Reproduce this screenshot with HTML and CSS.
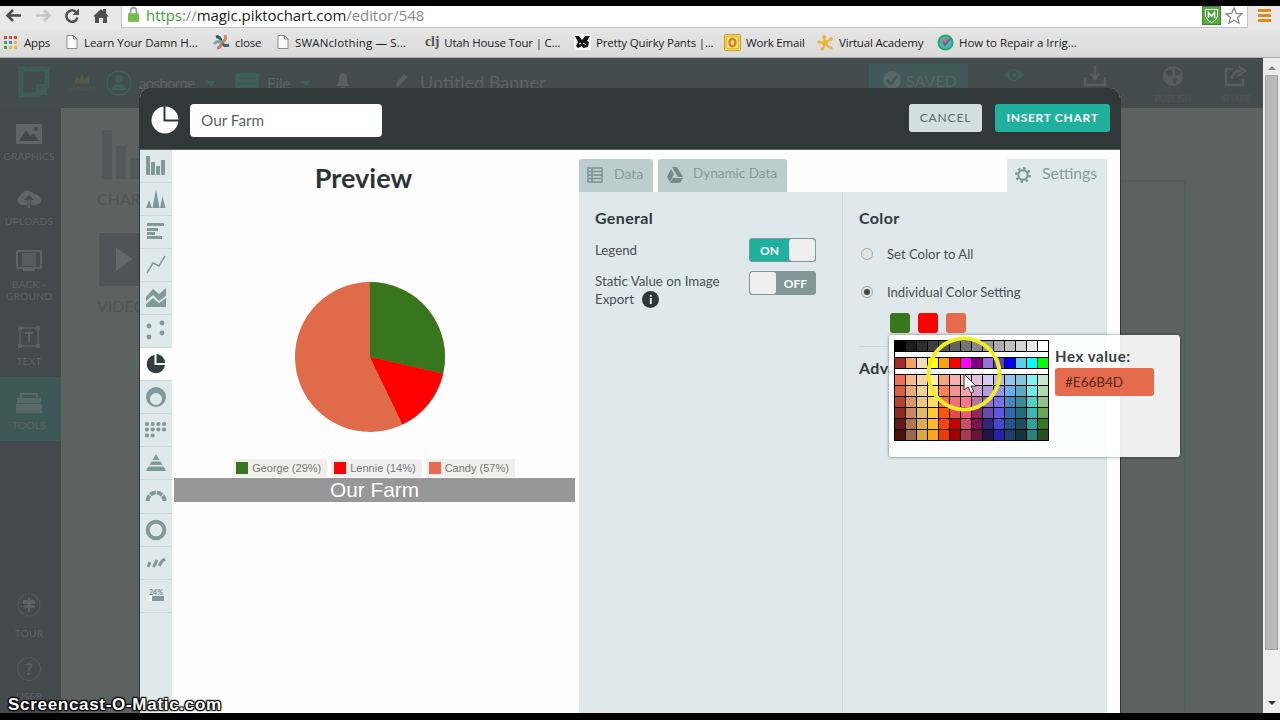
FILE: index.html
```html
<!DOCTYPE html>
<html lang="en">
<head>
    <meta charset="UTF-8">
    <title>Untitled Banner - Piktochart Editor</title>
    <link rel="stylesheet" href="styles.css">
</head>
<body>
    <div class="toolbar">
        <svg class="nav-icons" width="121" height="23" viewBox="0 0 121 23">
            <g fill="none" stroke-width="2.6">
                <path d="M21 9.500H8M13 4L7.500 9.500L13 15" stroke="#4c4c4c"/>
                <path d="M36 9.500H49M44 4L49.500 9.500L44 15" stroke="#c4c4c4"/>
                <path d="M76.500 6.500A5.700 5.700 0 1 0 77.500 11.500" stroke="#505050"/>
            </g>
            <path d="M79 2.500V9H72.500Z" fill="#505050"/>
            <path d="M93 10.500L101 3L103 5V3H106V7.500L109 10.500H107V17H103V12H99V17H95V10.500Z" fill="#505050"/>
        </svg>
        <div class="omnibox">
            <svg width="13" height="17" viewBox="0 0 13 17">
                <path d="M3.500 8V5A3 3.500 0 0 1 9.500 5V8" fill="none" stroke="#9a9a9a" stroke-width="1.800"/>
                <rect x="1" y="7" width="11" height="9" rx="1" fill="#7bc653"/>
                <path d="M1 10H12M1 13H12" stroke="#62ad3c"/>
            </svg>
            <span class="url"><span class="secure">https</span><span class="dim">://</span>magic.piktochart.com<span class="dim">/editor/548</span></span>
            <svg class="box-icons" width="42" height="20" viewBox="0 0 42 20">
                <rect x=".5" y=".5" width="18" height="18" fill="#57ab41" stroke="#378a2c"/>
                <path d="M3.500 3.500H15.500V10Q14 15 9.500 16.500Q5 15 3.500 10Z" fill="#4ca238" stroke="#fff"/>
                <path d="M6.500 12V6.500L9.500 10L12.500 6.500V12" fill="none" stroke="#fff" stroke-width="1.500"/>
                <path d="M32 2L34.300 7.300L40 7.800L35.600 11.600L37 17.200L32 14.200L27 17.200L28.400 11.600L24 7.800L29.700 7.300Z" fill="#fff" stroke="#888" stroke-width="1.300"/>
            </svg>
        </div>
        <div class="menu"><i></i><i></i><i></i></div>
    </div>

    <div class="bookmarks">
        <div class="bookmark">
            <svg width="16" height="16" viewBox="0 0 16 16">
                <g fill="#e0443a"><rect x="1" y="2" width="3" height="3"/><rect x="6" y="2" width="3" height="3"/><rect x="11" y="2" width="3" height="3"/></g>
                <g><rect x="1" y="7" width="3" height="3" fill="#3aa655"/><rect x="6" y="7" width="3" height="3" fill="#3f7ee8"/><rect x="11" y="7" width="3" height="3" fill="#edb62f"/></g>
                <g><rect x="1" y="12" width="3" height="3" fill="#3aa655"/><rect x="6" y="12" width="3" height="3" fill="#edb62f"/><rect x="11" y="12" width="3" height="3" fill="#edb62f"/></g>
            </svg>
            <span>Apps</span>
        </div>
        <div class="bookmark">
            <svg width="14" height="16" viewBox="0 0 14 16"><path d="M2 1.500H8.500L12 5V14.500H2ZM8.500 1.500V5H12" fill="#fafafa" stroke="#8d8d8d"/></svg>
            <span>Learn Your Damn H...</span>
        </div>
        <div class="bookmark">
            <svg width="17" height="16" viewBox="0 0 17 16">
                <g fill="none" stroke-width="3">
                    <path d="M8.500 8Q7 2 3 3" stroke="#33566a"/><path d="M8.500 8Q14 7 12 1" stroke="#d6866b"/>
                    <path d="M8.500 8Q10 13 16 11" stroke="#35677e"/><path d="M8.500 8Q8 14 4 14" stroke="#d1775e"/><path d="M8.500 8Q5 6 1 10" stroke="#78a6a5"/>
                </g>
            </svg>
            <span>close</span>
        </div>
        <div class="bookmark">
            <svg width="14" height="16" viewBox="0 0 14 16"><path d="M2 1.500H8.500L12 5V14.500H2ZM8.500 1.500V5H12" fill="#fafafa" stroke="#8d8d8d"/></svg>
            <span class="wide">SWANclothing — S...</span>
        </div>
        <div class="bookmark"><b class="clj">clj</b><span>Utah House Tour | C...</span></div>
        <div class="bookmark">
            <svg width="17" height="16" viewBox="0 0 17 16">
                <rect width="17" height="16" fill="#f7f7f7"/>
                <path d="M1 2H5L8 6L11 2H16L13 7L15 8L14 13L9 14L8 12L4 14L2 12L4 8Z" fill="#151515"/>
                <path d="M9 9L12 11M5 10L7 9" fill="none" stroke="#eee"/>
            </svg>
            <span>Pretty Quirky Pants |...</span>
        </div>
        <div class="bookmark">
            <svg width="17" height="17" viewBox="0 0 17 17"><rect x=".5" y=".5" width="16" height="16" rx="1" fill="#f8d65a" stroke="#d59c1c"/><rect x="2.500" y="2.500" width="12" height="12" fill="#fbe48b" stroke="#e5b53a"/><ellipse cx="8.500" cy="8.500" rx="3" ry="3.800" fill="none" stroke="#d18618" stroke-width="2.400"/></svg>
            <span>Work Email</span>
        </div>
        <div class="bookmark">
            <svg width="17" height="17" viewBox="0 0 17 17">
                <g stroke="#e9ae2d" stroke-width="2"><path d="M8 9L7 3M8 9L14 5M8 9L13 14M8 9L6 15M8 9L2 8"/></g>
                <g fill="#edb538"><circle cx="8" cy="9" r="3"/><circle cx="7" cy="3" r="2"/><circle cx="14" cy="5" r="2"/><circle cx="14" cy="14" r="1.800"/><circle cx="5" cy="15" r="1.800"/><circle cx="2" cy="8" r="1.800"/></g>
            </svg>
            <span>Virtual Academy</span>
        </div>
        <div class="bookmark">
            <svg width="17" height="17" viewBox="0 0 17 17"><circle cx="8.500" cy="8.500" r="7" fill="#56b4c2" stroke="#28a866" stroke-width="2"/><path d="M4 7L8 4L12 6L10 11Z" fill="#d4745c"/><path d="M6 8L8 11L13 5" fill="none" stroke="#3a77a8" stroke-width="2"/></svg>
            <span class="wide">How to Repair a Irrig...</span>
        </div>
    </div>

    <div class="viewport">
        <div class="app">
            <div class="app-bar">
                <svg class="logo" width="36" height="36" viewBox="0 0 36 36"><path d="M5 5H31V22L22 31H5Z" fill="none" stroke="#405d59" stroke-width="5"/><path d="M20 20H31V31H20Z" fill="#405d59"/><path d="M5 5H31V31H5Z" fill="none" stroke="#46504f" stroke-dasharray="2 4"/></svg>
                <div class="pro">
                    <svg width="18" height="13" viewBox="0 0 22 14"><path d="M2 13L3 4L8 8L11 1L14 8L19 4L20 13Z" fill="#555849"/></svg>
                    <span>UPGRADE</span>
                </div>
                <svg class="avatar" width="26" height="26" viewBox="0 0 26 26"><circle cx="13" cy="13" r="12" fill="none" stroke="#3c605d" stroke-width="1.500"/><circle cx="13" cy="9" r="4" fill="#3c605d"/><path d="M5 20Q6 14 13 14Q20 14 21 20Z" fill="#3c605d"/></svg>
                <span class="user">aosborne</span>
                <i class="caret"></i>
                <svg class="file-icon" width="26" height="19" viewBox="0 0 24 18"><rect x="1" y="1" width="22" height="16" rx="2" fill="#3c605d"/><path d="M4 6H20M4 11H20" stroke="#45504f" stroke-width="1.500"/></svg>
                <span class="file">File</span>
                <i class="caret"></i>
                <svg class="bell" width="16" height="18" viewBox="0 0 16 18"><path d="M1 14Q4 12 4 6Q4 2 8 1Q12 2 12 6Q12 12 15 14ZM6 15H10L8 17Z" fill="#596160"/></svg>
                <svg class="pencil" width="14" height="16" viewBox="0 0 14 16"><path d="M1 15L2 10L9 2L12 5L5 13Z" fill="#566060"/></svg>
                <span class="title">Untitled Banner</span>
                <div class="saved">
                    <svg width="20" height="20" viewBox="0 0 20 20"><circle cx="10" cy="10" r="9" fill="#5b6666"/><path d="M5 10L9 14L15 6" fill="none" stroke="#3f5754" stroke-width="2.500"/></svg>
                    SAVED
                </div>
                <svg class="eye" width="22" height="16" viewBox="0 0 22 16"><path d="M1 8Q11 -4 21 8Q11 20 1 8Z" fill="#3b5f5b"/><circle cx="11" cy="8" r="4.500" fill="#434d4e"/><circle cx="11" cy="8" r="2.200" fill="#3b5f5b"/></svg>
                <div class="action download"><svg width="24" height="24" viewBox="0 0 24 24"><path d="M2 13V21H22V13M12 2V14M8 10L12 15L16 10" fill="none" stroke="#565e5d" stroke-width="2.500"/></svg><span>DOWNLOADS</span></div>
                <div class="action"><svg width="24" height="24" viewBox="0 0 24 24"><circle cx="12" cy="12" r="10" fill="#565e5d"/><path d="M4 8L10 5L12 10L8 13ZM14 4L20 8L17 12L14 10ZM11 15L16 14L14 21" fill="#434b4c"/></svg><span>PUBLISH</span></div>
                <div class="action share"><svg width="24" height="24" viewBox="0 0 24 24"><path d="M9 5H2V21H19V15M8 15Q8 7 17 7M14 2L21 7L14 12" fill="none" stroke="#565e5d" stroke-width="2.500"/></svg><span>SHARE</span></div>
            </div>
            <div class="app-body">
                <div class="sidebar">
                    <div class="side-item">
                        <svg width="26" height="20" viewBox="0 0 26 20"><rect width="26" height="20" rx="1" fill="#5d6566"/><path d="M3 17L10 6L14 12L17 9L23 17Z" fill="#42494a"/><circle cx="20" cy="5" r="2" fill="#42494a"/></svg>
                        <span>GRAPHICS</span>
                    </div>
                    <div class="side-item">
                        <svg width="26" height="20" viewBox="0 0 26 20"><path d="M5 16A5 5 0 0 1 4 7A8 8 0 0 1 18 5Q25 6 25 12Q24 16 20 16H15V11H18L13 6L8 11H11V16ZM12 11H14V19H12Z" fill="#5d6566"/></svg>
                        <span>UPLOADS</span>
                    </div>
                    <div class="side-item tall">
                        <svg width="26" height="22" viewBox="0 0 26 22"><rect x="1" y="1" width="24" height="17" rx="1" fill="none" stroke="#5b6364" stroke-width="2"/><rect x="6" y="3" width="14" height="13" fill="#545c5d"/><path d="M7 19H19V21H7Z" fill="#5b6364"/></svg>
                        <span>BACK -<br>GROUND</span>
                    </div>
                    <div class="side-item">
                        <svg width="24" height="24" viewBox="0 0 24 24"><rect x="3" y="3" width="18" height="18" fill="none" stroke="#596162" stroke-width="1.500"/><path d="M1 1H5V5H1ZM19 1H23V5H19ZM1 19H5V23H1ZM19 19H23V23H19Z" fill="#596162"/><path d="M8 8H16M12 8V17" stroke="#596162" stroke-width="2"/></svg>
                        <span>TEXT</span>
                    </div>
                    <div class="side-item active">
                        <svg width="26" height="21" viewBox="0 0 26 21"><path d="M5 6V2H21V6" fill="none" stroke="#5a6867" stroke-width="2"/><path d="M1 6H25V11H1ZM0 12H26V21H0Z" fill="#5a6867"/></svg>
                        <span>TOOLS</span>
                    </div>
                    <div class="side-item tour">
                        <svg width="24" height="24" viewBox="0 0 24 24"><circle cx="12" cy="12" r="11" fill="none" stroke="#545c5e"/><path d="M6 7H17L19 9L17 11H6ZM8 12H18V15H8L5 13.500ZM11 5H13V19H11Z" fill="#5b6364"/></svg>
                        <span>TOUR</span>
                    </div>
                    <div class="side-item help">
                        <b>?</b>
                        <span>USER</span>
                    </div>
                </div>
                <div class="tool-list">
                    <svg width="48" height="49" viewBox="0 0 48 49"><path d="M0 0H10V49H0ZM14 16H24V49H14ZM28 28H38V49H28Z" fill="#515958"/></svg>
                    <span>CHARTS</span>
                    <svg class="video" width="50" height="53" viewBox="0 0 50 53"><rect width="50" height="53" fill="#4d5556"/><path d="M17 15L34 26L17 38Z" fill="#616867"/></svg>
                    <span>VIDEOS</span>
                </div>
                <div class="canvas"></div>
            </div>
        </div>
        <div class="scrollbar"><i class="up"></i><div class="thumb"></div><i class="down"></i></div>

        <div class="modal">
            <div class="modal-header">
                <svg width="28" height="28" viewBox="0 0 28 28"><circle cx="14" cy="14" r="13.500" fill="#fff"/><path d="M13.500 0V14.500H28" fill="none" stroke="#303838" stroke-width="2"/></svg>
                <div class="name-input">Our Farm</div>
                <div class="btn cancel">CANCEL</div>
                <div class="btn insert">INSERT CHART</div>
            </div>
            <div class="modal-body">
                <div class="chart-types">
                    <div class="type"><svg width="22" height="22" viewBox="0 0 22 22"><path d="M1 1H5V20H1ZM6 7H10V20H6ZM11 11H15V20H11ZM16 5H20V20H16Z"/></svg></div>
                    <div class="type"><svg width="22" height="22" viewBox="0 0 22 22"><path d="M1 20L4 12L7 20ZM7.500 20L11 1L14.500 20ZM15 20L17.500 8L20.500 20Z"/></svg></div>
                    <div class="type"><svg width="22" height="22" viewBox="0 0 22 22"><path d="M2 2H19V5H2ZM2 7H13V10H2ZM2 11H10V14H2ZM2 15H17V18H2Z"/></svg></div>
                    <div class="type"><svg width="22" height="22" viewBox="0 0 22 22"><path class="line" d="M2 19L8 9L14 12L20 2"/></svg></div>
                    <div class="type"><svg width="22" height="22" viewBox="0 0 22 22"><path d="M1 10L8 2L14 7L21 1V9L14 14L8 8L1 14ZM1 17L8 11L14 16L21 11V20H1Z"/></svg></div>
                    <div class="type"><svg width="22" height="22" viewBox="0 0 22 22"><circle cx="4" cy="6" r="2.400"/><circle cx="17" cy="3" r="2.400"/><circle cx="4" cy="17" r="2.400"/><circle cx="17" cy="13" r="2.400"/></svg></div>
                    <div class="type selected"><svg width="22" height="22" viewBox="0 0 22 22"><path d="M9.500 2A9.200 9.200 0 1 0 20 12H9.500ZM11.500 1A9 9 0 0 1 20 10H11.500Z"/></svg></div>
                    <div class="type"><svg width="22" height="22" viewBox="0 0 22 22"><path fill-rule="evenodd" d="M11 1A10 10 0 1 0 11 21A10 10 0 1 0 11 1ZM11 7A6 6 0 1 1 11 19A6 6 0 1 1 11 7Z"/></svg></div>
                    <div class="type"><svg width="22" height="22" viewBox="0 0 22 22"><g><circle cx="2" cy="5" r="2.100"/><circle cx="7.700" cy="5" r="2.100"/><circle cx="13.400" cy="5" r="2.100"/><circle cx="19" cy="5" r="2.100"/><circle cx="2" cy="10.500" r="2.100"/><circle cx="7.700" cy="10.500" r="2.100"/><circle cx="13.400" cy="10.500" r="2.100"/><circle cx="19" cy="10.500" r="2.100"/><circle cx="2" cy="16.500" r="2.100"/><circle cx="7.700" cy="16.500" r="2.100"/></g></svg></div>
                    <div class="type"><svg width="22" height="22" viewBox="0 0 22 22"><path d="M11 2L14.500 8H7.500ZM6.500 9.500H15.500L17.500 13H4.500ZM3.500 14.500H18.500L21 19H1Z"/></svg></div>
                    <div class="type"><svg width="22" height="22" viewBox="0 0 22 22"><path class="gauge" d="M2.500 16A8.500 8.500 0 0 1 19.500 16"/></svg></div>
                    <div class="type"><svg width="22" height="22" viewBox="0 0 22 22"><circle class="ring" cx="11" cy="11" r="8.300"/></svg></div>
                    <div class="type"><svg width="22" height="22" viewBox="0 0 22 22"><path class="slash" d="M3 15L5 10M8.500 15L12 8M14 14L17 9L20 7"/></svg></div>
                    <div class="type percent"><span>24%</span><i></i></div>
                </div>
                <div class="preview">
                    <h2>Preview</h2>
                    <svg class="pie" width="150" height="150" viewBox="0 0 150 150">
                        <circle cx="75" cy="75" r="75" fill="#e06b4b"/>
                        <path d="M75 75V0A75 75 0 0 1 148.100 91.700Z" fill="#38761d"/>
                        <path d="M75 75L148.100 91.700A75 75 0 0 1 107.500 142.600Z" fill="#ff0000"/>
                    </svg>
                    <div class="legend">
                        <span><i class="green"></i>George (29%)</span>
                        <span><i class="red"></i>Lennie (14%)</span>
                        <span><i class="orange"></i>Candy (57%)</span>
                    </div>
                    <div class="caption">Our Farm</div>
                </div>
                <div class="options">
                    <div class="tabs">
                        <div class="tab data">
                            <svg width="16" height="16" viewBox="0 0 16 16"><path d="M1 1H15V15H1ZM1 4.500H15M1 8H15M1 11.500H15M5 1V15" fill="none" stroke="#7a9394" stroke-width="1.500"/></svg>
                            Data
                        </div>
                        <div class="tab dynamic">
                            <svg width="18" height="16" viewBox="0 0 18 16"><path d="M6 0H11L17 10H12ZM5 2L8 7L4 15L1 10ZM7 11H17L14 16H4Z" fill="#728a8b"/></svg>
                            Dynamic Data
                        </div>
                        <div class="tab settings">
                            <svg width="16" height="16" viewBox="0 0 16 16"><circle cx="8" cy="8" r="4.700" fill="none" stroke="#7a9394" stroke-width="2"/><circle cx="8" cy="8" r="6.700" fill="none" stroke="#7a9394" stroke-width="2.400" stroke-dasharray="2.400 2.860"/></svg>
                            Settings
                        </div>
                    </div>
                    <div class="panels">
                        <div class="general">
                            <h3>General</h3>
                            <div class="option">
                                <span>Legend</span>
                                <div class="switch on"><b>ON</b><i></i></div>
                            </div>
                            <div class="option export">
                                <span>Static Value on Image<br>Export <em>i</em></span>
                                <div class="switch off"><i></i><b>OFF</b></div>
                            </div>
                        </div>
                        <div class="color">
                            <h3>Color</h3>
                            <div class="choice"><i></i>Set Color to All</div>
                            <div class="choice checked"><i></i>Individual Color Setting</div>
                            <div class="swatches"><i class="green"></i><i class="red"></i><i class="orange"></i></div>
                            <h3 class="advanced">Advanced</h3>
                        </div>
                    </div>
                </div>
            </div>
        </div>

        <div class="picker">
            <div class="palette" id="palette"></div>
            <div class="hex">
                <label>Hex value:</label>
                <div class="hex-input">#E66B4D</div>
            </div>
        </div>
        <svg class="pointer" width="76" height="76" viewBox="0 0 76 76">
            <circle cx="38" cy="38" r="35.500" fill="none" stroke="#f0f01e" stroke-width="4"/>
            <path d="M38 38V54L42 51L45 57L48 55.500L45 50H50Z" fill="#fff" stroke="#333" stroke-width="1"/>
        </svg>
    </div>
    <div class="watermark">Screencast-O-Matic.com</div>

    <script>
        const groups = [
            ['000 1c1c1c 2d2d2d 3e3e3e 505050 626262 747474 878787 9a9a9a adadad c0c0c0 d3d3d3 e9e9e9 fff'],
            ['a52a2a f4a460 f5deb3 ff0 ffa500 f00 f0f 800080 9370db 5b48b8 00f 56cfea 0ff 0f0'],
            [
                'ee7350 f3bc85 f7d6a6 fff0a0 f6a27a f7b1b1 ffc5d0 dfc4dc d9c9f0 b6bcf0 92c4ee 83c5d9 7bf5ed c8e8ce',
                'd9603f e8ae78 f5d391 ffe878 fb8352 f39494 ff9fae cfa0cb b79be5 9496ee 68aee8 5babbb 6dedeb aedbab',
                'b3442b d79968 efc77c ffdc5b ff7330 ec7177 ff728c b2739e 936fd5 7771e8 448ac2 388c98 4fd1ce 8fc383',
                '8b2a20 c58a5b e5b95e ffcb31 ff5700 df4c50 ee5570 912560 694bac 5959df 286dad 236d79 37b9b5 67a653',
                '641818 ad7951 dfad4e ffbd22 ff4300 c70000 d04862 7c124e 34237d 4646ce 21558c 1a505c 2ba39d 37751e',
                '4b100c 99694a dca63e ffa51b f43a00 a20000 ae364e 69133f 211448 2222ad 1a436f 12363b 23857f 28501a'
            ]
        ];
        const palette = document.getElementById('palette');
        groups.forEach(rows => {
            const group = document.createElement('div');
            group.className = 'palette-group';
            rows.join(' ').split(' ').forEach(hex => {
                const cell = document.createElement('i');
                cell.style.background = '#' + hex;
                group.appendChild(cell);
            });
            palette.appendChild(group);
        });
    </script>
</body>
</html>
```

FILE: styles.css
```css
* {
    box-sizing: border-box;
}
body {
    margin: 0;
    width: 1280px;
    height: 720px;
    overflow: hidden;
    background: #000;
    border-top: 6px solid #000;
    border-bottom: 7px solid #000;
    display: flex;
    flex-direction: column;
    position: relative;
    font-family: Lato, sans-serif;
}
svg {
    display: block;
    flex: none;
}
h2, h3 {
    margin: 0;
}

/* browser */
.toolbar {
    height: 23px;
    flex: none;
    display: flex;
    background: #e9e9e9;
}
.omnibox {
    width: 1127px;
    height: 22px;
    background: #fff;
    border-left: 1px solid #c5c5c5;
    border-right: 1px solid #c5c5c5;
    display: flex;
    align-items: flex-start;
    padding-left: 5px;
    border-bottom: 1px solid #c2c2c2;
}
.url {
    flex: 1;
    margin-left: 6px;
    font: 15px/19px "Open Sans", sans-serif;
    letter-spacing: -.06px;
    color: #222;
}
.url .secure {
    color: #43a035;
}
.url .dim {
    color: #8a8a8a;
}
.box-icons {
    margin-right: 3px;
}
.menu {
    margin: 3px 0 0 10px;
    width: 13px;
}
.menu i {
    display: block;
    height: 3px;
    margin-bottom: 2px;
    background: #df8a1b;
}
.bookmarks {
    height: 29px;
    flex: none;
    padding: 0 0 2px 3px;
    background: linear-gradient(#e5e5e5, #dadada);
    border-bottom: 1px solid #aaa;
    display: grid;
    grid-template-columns: 62px 148px 63px 149px 149px 150px 93px 120px 200px;
}
.bookmark {
    display: flex;
    align-items: center;
    gap: 5px;
    font: 11.500px "Open Sans", sans-serif;
    letter-spacing: -.18px;
    color: #222;
    white-space: nowrap;
}
.bookmark:nth-child(2) span {
    letter-spacing: -.05px;
}
.bookmark .wide {
    letter-spacing: -.06px;
}
.bookmark:nth-child(4) .wide {
    letter-spacing: .15px;
}
.clj {
    font: bold 14px "Liberation Serif", serif;
    color: #555;
}

/* dimmed editor behind the dialog */
.viewport {
    height: 655px;
    flex: none;
    display: flex;
    position: relative;
    overflow: hidden;
}
.app {
    width: 1263px;
    height: 655px;
    display: flex;
    flex-direction: column;
    background: #5b6260;
}
.app-bar {
    height: 50px;
    flex: none;
    display: flex;
    background: #434c4d;
    padding-left: 16px;
    overflow: hidden;
    color: #5a6362;
}
.app-bar > * {
    flex: none;
}
.logo {
    margin-top: 6px;
}
.pro {
    width: 30px;
    margin: 14px 0 0 15px;
    display: flex;
    flex-direction: column;
    align-items: center;
    font-size: 6px;
    color: #56533f;
}
.avatar {
    margin: 12px 0 0 9px;
}
.user, .file {
    margin: 15px 0 0 7px;
    font-size: 15px;
    line-height: 20px;
}
.user {
    width: 57px;
    letter-spacing: -.7px;
}
.user, .file, .title {
    white-space: nowrap;
}
.caret {
    margin: 23px 0 0 10px;
    width: 10px;
    height: 5px;
    border: 5px solid transparent;
    border-top-color: #3c605d;
}
.file-icon {
    margin: 14px 0 0 18px;
}
.file {
    width: 22px;
}
.file + .caret {
    margin-left: 12px;
}
.bell {
    margin: 14px 0 0 24px;
}
.pencil {
    margin: 14px 0 0 44px;
}
.title {
    width: 449px;
    margin: 12px 0 0 11px;
    font-size: 18px;
    line-height: 24px;
}
.saved {
    width: 99px;
    height: 32px;
    margin-top: 6px;
    background: #40585a;
    display: flex;
    align-items: center;
    gap: 4px;
    padding-left: 13px;
    font-size: 16px;
}
.eye {
    margin: 9px 59px 0 35px;
}
.action {
    width: 80px;
    padding-top: 6px;
    display: flex;
    flex-direction: column;
    align-items: center;
    gap: 6px;
    font-size: 9px;
    line-height: 10px;
    color: #4e5655;
    margin-left: -18px;
}
.action.download {
    margin: 0 16px 0 -29px;
}
.action.share {
    margin-left: -17px;
}
.app-body {
    flex: 1;
    min-height: 0;
    display: flex;
}
.sidebar {
    width: 61px;
    background: #424a4b;
}
.side-item {
    height: 65px;
    width: 58px;
    padding-top: 16px;
    display: flex;
    flex-direction: column;
    align-items: center;
    gap: 6px;
    font-size: 10.400px;
    line-height: 12px;
    letter-spacing: .1px;
    text-align: center;
    color: #5b6363;
}
.side-item:nth-child(2) {
    height: 64px;
}
.side-item.tall {
    height: 72px;
    padding-top: 13px;
}
.side-item.active {
    width: 61px;
    height: 64px;
    margin-top: 3px;
    padding: 15px 3px 0 0;
    background: #3e5757;
}
.side-item.tour {
    margin-top: 143px;
    padding-top: 9px;
    gap: 10px;
}
.side-item.help {
    padding-top: 8px;
    gap: 9px;
}
.side-item.help b {
    width: 24px;
    height: 24px;
    border: 1px solid #545c5e;
    border-radius: 50%;
    font-size: 17px;
    line-height: 22px;
}
.tool-list {
    width: 560px;
    padding: 22px 0 0 41px;
    font-size: 16px;
    line-height: 20px;
    color: #4e5655;
}
.tool-list span {
    display: block;
    margin: 10px 0 0 -5px;
}
.tool-list .video {
    margin: 24px 0 9px -3px;
}
.canvas {
    width: 565px;
    margin-top: 72px;
    border: solid #53605d;
    border-width: 2px 2px 0 0;
}
.scrollbar {
    width: 17px;
    padding: 4px 2px 4px 2px;
    background: #ededed;
    display: flex;
    flex-direction: column;
    align-items: center;
}
.scrollbar i {
    border: 4px solid transparent;
}
.scrollbar .up {
    border-bottom-color: #888;
}
.scrollbar .down {
    margin-top: auto;
    border-top-color: #333;
}
.thumb {
    width: 13px;
    height: 575px;
    margin-top: 5px;
    background: #b9b9b9;
    border: 1px solid #a2a2a2;
}

/* chart dialog */
.modal {
    position: absolute;
    left: 139px;
    top: 30px;
    width: 982px;
    height: 625px;
    display: flex;
    flex-direction: column;
    background: #fdfefd;
    border: 1px solid #303838;
    border-width: 0 1px;
    border-radius: 10px 10px 0 0;
    overflow: hidden;
}
.modal-header {
    height: 62px;
    flex: none;
    display: flex;
    background: #303838;
    padding-left: 11px;
    border-bottom: 1px solid #5c6463;
}
.modal-header svg {
    margin-top: 18px;
}
.name-input {
    width: 192px;
    height: 33px;
    margin: 16px auto 0 11px;
    padding-left: 11px;
    background: #fff;
    border-radius: 4px;
    font-size: 15.300px;
    line-height: 33px;
    color: #5d6261;
}
.btn {
    height: 28px;
    margin-top: 16px;
    border-radius: 3px;
    font-size: 12px;
    line-height: 28px;
    letter-spacing: .85px;
    text-align: center;
}
.cancel {
    width: 73px;
    background: #d4dfdf;
    color: #59696b;
}
.insert {
    width: 115px;
    margin-left: 13px;
    margin-right: 10px;
    background: #20b09e;
    color: #fff;
    font-weight: bold;
    letter-spacing: .7px;
}
.modal-body {
    flex: 1;
    display: flex;
}
.chart-types {
    width: 32px;
    background: #dfe9ea;
}
.type {
    height: 33.050px;
    display: flex;
    align-items: center;
    justify-content: center;
    border-bottom: 1px solid #cbd9db;
}
.type svg {
    fill: #80999a;
}
.type.selected {
    background: #fff;
}
.type.selected svg {
    fill: #333e40;
}
.type .line, .type .ring, .type .gauge, .type .slash {
    fill: none;
    stroke: #80999a;
    stroke-width: 1.500;
}
.type .ring {
    stroke-width: 4;
}
.type .gauge {
    stroke-width: 4;
    stroke-dasharray: 6 1;
}
.type .slash {
    stroke-width: 3;
}
.type.percent {
    flex-direction: column;
    font-size: 7px;
    line-height: 8px;
    color: #718b8d;
    font-weight: bold;
    padding-bottom: 2px;
}
.percent i {
    width: 15px;
    height: 5px;
    background: #80999a;
    border-left: 3px solid #fff;
}
.preview {
    width: 407px;
    padding: 0 4px 0 2px;
    display: flex;
    flex-direction: column;
    align-items: center;
}
.preview h2 {
    margin-top: 11px;
    padding-right: 22px;
    font-size: 27px;
    line-height: 34px;
    color: #2c3536;
}
.pie {
    margin: 87px 10px 0 0;
}
.legend {
    display: flex;
    gap: 4px;
    height: 18px;
    margin-top: 27px;
    padding-right: 1px;
}
.legend span {
    display: flex;
    align-items: center;
    padding: 0 6px 0 3px;
    background: #efefed;
    font: 11px "Liberation Sans", sans-serif;
    color: #777;
}
.legend i {
    width: 12px;
    height: 12px;
    margin-right: 4px;
}
.caption {
    width: 401px;
    height: 24px;
    margin-top: 1px;
    background: #979797;
    color: #fff;
    font: 20.800px/24px "Liberation Sans", sans-serif;
    text-align: center;
}
.green {
    background: #38761d;
}
.red {
    background: #f00;
}
.orange {
    background: #e66b4d;
}
.options {
    width: 528px;
    padding-top: 9px;
    display: flex;
    flex-direction: column;
}
.tabs {
    height: 33px;
    display: flex;
}
.tab {
    height: 33px;
    padding: 0 0 5px 8px;
    display: flex;
    align-items: center;
    gap: 11px;
    background: #bdcdcd;
    border-radius: 3px 3px 0 0;
    font-size: 14px;
    color: #859c9e;
}
.tab svg {
    position: relative;
    top: 2px;
}
.tab.data {
    width: 74px;
}
.tab.dynamic {
    width: 129px;
    margin-left: 5px;
    gap: 9px;
    white-space: nowrap;
    font-size: 13.500px;
}
.tab.settings {
    width: 100px;
    margin-left: auto;
    background: #dfe9ea;
    border-radius: 0;
    font-size: 15.700px;
}
.panels {
    flex: 1;
    display: flex;
    background: #dfe8ea;
}
.general {
    width: 264px;
    padding: 15px 26px 0 16px;
    border-right: 1px solid #ccd9db;
}
.color {
    flex: 1;
    padding: 15px 0 0 16px;
}
.panels h3 {
    font-size: 16px;
    line-height: 22px;
    letter-spacing: .35px;
    color: #303a3b;
}
.option {
    display: flex;
    justify-content: space-between;
    margin-top: 9px;
    font-size: 13.300px;
    line-height: 18px;
    color: #465254;
}
.option span {
    padding-top: 3px;
    white-space: nowrap;
}
.option.export span {
    padding-top: 1px;
}
.option em {
    display: inline-block;
    width: 17px;
    height: 17px;
    margin-left: 5px;
    border-radius: 50%;
    background: #30393a;
    color: #fff;
    font: bold 12px/17px Lato, sans-serif;
    text-align: center;
}
.switch {
    width: 67px;
    height: 24px;
    flex: none;
    display: flex;
    border: 1px solid #819798;
    border-radius: 3px;
    color: #fff;
    font-size: 12px;
    line-height: 23px;
}
.switch b {
    flex: 1;
    text-align: center;
}
.switch i {
    width: 26px;
    background: #efefef;
    border-radius: 3px;
}
.switch.on {
    background: #20b09e;
}
.switch.off {
    background: #819798;
}
.choice {
    margin-top: 16px;
    height: 22px;
    display: flex;
    align-items: center;
    gap: 14px;
    padding-left: 2px;
    font-size: 13.100px;
    color: #465254;
}
.color h3 + .choice {
    margin-top: 14px;
}
.choice i {
    width: 12px;
    height: 12px;
    border: 1px solid #a6acad;
    border-radius: 50%;
    background: #e3e3e3;
}
.choice.checked i {
    border: 3.500px solid #dedede;
    outline: 1px solid #a6acad;
    outline-offset: -1px;
    background: #444;
}
.swatches {
    display: flex;
    gap: 8px;
    margin: 10px 0 0 31px;
}
.swatches i {
    width: 20px;
    height: 20px;
    border-radius: 3px;
}
.panels .advanced {
    margin-top: 13px;
    padding-top: 10px;
    border-top: 1px solid #cad6d8;
}

/* color picker popup */
.picker {
    position: absolute;
    left: 889px;
    top: 277px;
    width: 291px;
    height: 122px;
    padding: 5px;
    display: flex;
    gap: 6px;
    background: rgba(255, 255, 255, .9);
    border-radius: 3px;
    box-shadow: 0 0 3px rgba(0, 0, 0, .55);
}
.palette {
    width: 155px;
    height: 101px;
    background: #fff;
    display: flex;
    flex-direction: column;
    justify-content: space-between;
    border: solid #000;
    border-width: 0 1px;
}
.palette-group {
    display: grid;
    grid-template-columns: repeat(14, 10px);
    grid-auto-rows: 10px;
    gap: 1px;
    padding: 1px 0;
    background: #000;
}
.hex label {
    display: block;
    margin-top: 6px;
    font-size: 15px;
    font-weight: bold;
    line-height: 20px;
    letter-spacing: .6px;
    color: #344041;
}
.hex-input {
    width: 99px;
    height: 28px;
    margin-top: 2px;
    padding-left: 10px;
    border-radius: 3px;
    background: #e66b4d;
    font-size: 13.500px;
    line-height: 28px;
    color: #512a20;
}
.pointer {
    position: absolute;
    left: 926px;
    top: 278px;
}
.watermark {
    position: absolute;
    left: 8px;
    top: 689px;
    font: bold 17px/20px "Liberation Sans", sans-serif;
    letter-spacing: .7px;
    color: #fff;
    text-shadow: 0 0 2px #000, 1px 1px 1px #000, -1px -1px 1px #000, 1px -1px 1px #000, -1px 1px 1px #000;
}
```
